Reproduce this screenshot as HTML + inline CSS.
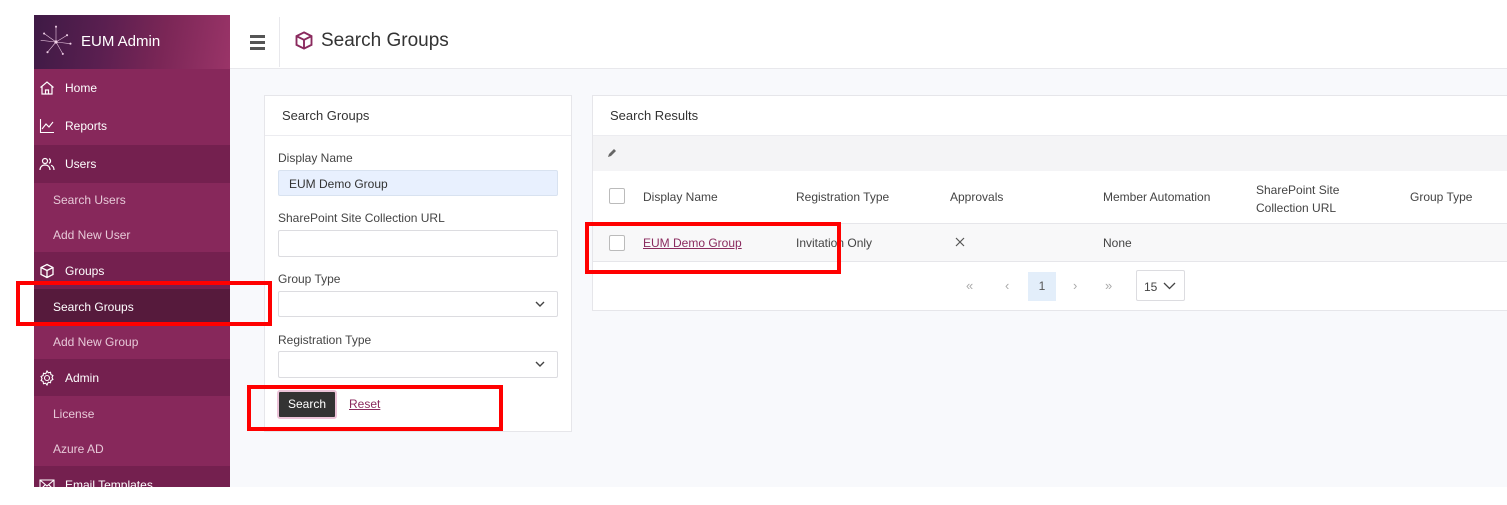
<!DOCTYPE html>
<html><head><meta charset="utf-8"><style>
*{box-sizing:border-box;margin:0;padding:0}
body{width:1507px;height:505px;background:#fff;font-family:"Liberation Sans",sans-serif;position:relative;overflow:hidden;color:#333}
.a{position:absolute}
.sb{left:34px;top:15px;width:196px;height:472px;background:#87285b;overflow:hidden}
.logo{left:0;top:0;width:196px;height:54px;background:linear-gradient(100deg,#3e1a45 0%,#5a1f50 35%,#7a2656 65%,#9a3468 100%)}
.it{left:0;width:196px;color:#fff;font-size:12px;display:flex;align-items:center}
.sec{background:#74204f}
.sub{color:#e7c9d8;padding-left:19px}
.act{background:#561a3c;color:#fff}
.ic{width:16px;height:16px;margin:0 10px 0 5px}
.hdr{left:230px;top:15px;width:1277px;height:54px;background:#fff;border-bottom:1px solid #e8e8ec}
.cont{left:230px;top:69px;width:1277px;height:418px;background:#f8f9fc}
.card{background:#fff;border:1px solid #e6e6ea}
.lbl{font-size:12px;color:#444}
.inp{background:#fff;border:1px solid #dcdce0;border-radius:2px}
.th{font-size:12px;color:#444;top:190px}
.red{border:4px solid #f00}
.hb{left:20px;width:15px;height:3px;background:#555}
</style></head><body>
<div class="a sb">
 <div class="a logo">
  <svg class="a" style="left:5px;top:8px" width="34" height="38" viewBox="0 0 40 44" stroke="#e9c6e0" stroke-width="0.7" fill="#f2d8ea"><path d="M20 22 L20 4 M20 22 L6 12 M20 22 L33 14 M20 22 L10 34 M20 22 L28 36 M20 22 L37 24 M20 22 L2 20" fill="none"/><circle cx="20" cy="22" r="1.6"/><circle cx="20" cy="4" r="0.9"/><circle cx="6" cy="12" r="0.9"/><circle cx="33" cy="14" r="0.9"/><circle cx="10" cy="34" r="0.9"/><circle cx="28" cy="36" r="0.9"/><circle cx="37" cy="24" r="0.9"/></svg>
  <div class="a" style="left:47px;top:18px;color:#fff;font-size:15px">EUM Admin</div>
 </div>
 <div class="a it" style="top:54px;height:38px"><svg class="ic" viewBox="0 0 16 16" fill="none" stroke="#fff" stroke-width="1.2"><path d="M1.5 7.5L8 2l6.5 5.5M3 6.5V14h10V6.5M6.5 14V10h3v4"/></svg>Home</div>
 <div class="a it" style="top:92px;height:38px"><svg class="ic" viewBox="0 0 16 16" fill="none" stroke="#fff" stroke-width="1.1"><path d="M1.5 1v13.5H15M3 11l4-5 3 3 4-5"/></svg>Reports</div>
 <div class="a it sec" style="top:130px;height:38px"><svg class="ic" viewBox="0 0 16 16" fill="none" stroke="#fff" stroke-width="1.2"><circle cx="6" cy="5" r="2.5"/><path d="M1 14c0-3 2-5 5-5s5 2 5 5M10 2.7a2.5 2.5 0 010 4.6M12 9.3c2 .6 3 2.5 3 4.7"/></svg>Users</div>
 <div class="a it sub" style="top:168px;height:34px">Search Users</div>
 <div class="a it sub" style="top:202px;height:35px">Add New User</div>
 <div class="a it sec" style="top:237px;height:37px"><svg class="ic" viewBox="0 0 16 16" fill="none" stroke="#fff" stroke-width="1.3"><path d="M8 1.5l6 3v7l-6 3-6-3v-7zM2 4.5l6 3 6-3M8 7.5v7"/></svg>Groups</div>
 <div class="a it sub act" style="top:274px;height:35px">Search Groups</div>
 <div class="a it sub" style="top:309px;height:35px">Add New Group</div>
 <div class="a it sec" style="top:344px;height:37px"><svg class="ic" viewBox="0 0 16 16" fill="none" stroke="#fff" stroke-width="1.1"><circle cx="8" cy="8" r="2.5"/><path d="M8 1l1.3 1.8 2.2-.5.4 2.2 2 1-.9 2 .9 2-2 1-.4 2.2-2.2-.5L8 15l-1.3-1.8-2.2.5-.4-2.2-2-1 .9-2-.9-2 2-1 .4-2.2 2.2.5z"/></svg>Admin</div>
 <div class="a it sub" style="top:381px;height:35px">License</div>
 <div class="a it sub" style="top:416px;height:35px">Azure AD</div>
 <div class="a it sec" style="top:451px;height:38px"><svg class="ic" viewBox="0 0 16 16" fill="none" stroke="#fff" stroke-width="1.1"><path d="M1 3h14v10H1zM1 3l7 6 7-6M1 13l5-5M15 13l-5-5"/></svg>Email Templates</div>
</div>
<div class="a hdr">
 <div class="a hb" style="top:20px"></div>
 <div class="a hb" style="top:26px"></div>
 <div class="a hb" style="top:32px"></div>
 <div class="a" style="left:49px;top:2px;width:1px;height:50px;background:#e8e8ec"></div>
 <svg class="a" style="left:64px;top:15px" width="20" height="21" viewBox="0 0 16 16" fill="none" stroke="#8a2a5e" stroke-width="1.5"><path d="M8 1.5l6 3v7l-6 3-6-3v-7zM2 4.5l6 3 6-3M8 7.5v7"/></svg>
 <div class="a" style="left:91px;top:15px;font-size:19px;color:#333">Search Groups</div>
</div>
<div class="a cont"></div>
<div class="a card" style="left:264px;top:95px;width:308px;height:337px">
 <div class="a" style="left:0;top:0;width:306px;height:40px;border-bottom:1px solid #ececf0"></div>
 <div class="a" style="left:17px;top:12px;font-size:13px;color:#333">Search Groups</div>
 <div class="a lbl" style="left:13px;top:55px">Display Name</div>
 <div class="a inp" style="left:13px;top:74px;width:280px;height:26px;background:#e8f0fe;border-color:#d8e2f0"><span class="a" style="left:10px;top:6px;font-size:12px;color:#333">EUM Demo Group</span></div>
 <div class="a lbl" style="left:13px;top:115px">SharePoint Site Collection URL</div>
 <div class="a inp" style="left:13px;top:134px;width:280px;height:27px"></div>
 <div class="a lbl" style="left:13px;top:176px">Group Type</div>
 <div class="a inp" style="left:13px;top:195px;width:280px;height:26px"><svg class="a" style="left:256px;top:9px" width="10" height="7" viewBox="0 0 10 7" fill="none" stroke="#444" stroke-width="1.4"><path d="M1 1l4 4 4-4"/></svg></div>
 <div class="a lbl" style="left:13px;top:237px">Registration Type</div>
 <div class="a inp" style="left:13px;top:255px;width:280px;height:27px"><svg class="a" style="left:256px;top:9px" width="10" height="7" viewBox="0 0 10 7" fill="none" stroke="#444" stroke-width="1.4"><path d="M1 1l4 4 4-4"/></svg></div>
 <div class="a" style="left:12px;top:294px;width:60px;height:29px;background:#333;border:2px solid #ecc3d8;border-radius:3px;color:#fff;font-size:12px;text-align:center;line-height:25px">Search</div>
 <div class="a" style="left:84px;top:301px;font-size:12px;color:#8a2a5e;text-decoration:underline">Reset</div>
</div>
<div class="a card" style="left:592px;top:95px;width:920px;height:216px">
 <div class="a" style="left:17px;top:12px;font-size:13px;color:#333">Search Results</div>
 <div class="a" style="left:0;top:39px;width:918px;height:36px;background:#f4f4f6;border-top:1px solid #ececf0"></div>
 <svg class="a" style="left:14px;top:52px" width="10" height="10" viewBox="0 0 10 10"><path d="M1 9l1-3 5-5 2 2-5 5z" fill="#666"/></svg>
 <div class="a" style="left:0;top:127px;width:918px;height:39px;background:#f8f8f9;border-top:1px solid #e6e6ea;border-bottom:1px solid #e6e6ea"></div>
</div>
<div class="a" style="left:609px;top:188px;width:16px;height:16px;border:1px solid #bbb;border-radius:2px;background:#fff"></div>
<div class="a th" style="left:643px">Display Name</div>
<div class="a th" style="left:796px">Registration Type</div>
<div class="a th" style="left:950px">Approvals</div>
<div class="a th" style="left:1103px">Member Automation</div>
<div class="a" style="left:1256px;top:181px;font-size:12px;color:#444;line-height:18px">SharePoint Site<br>Collection URL</div>
<div class="a th" style="left:1410px">Group Type</div>
<div class="a" style="left:609px;top:235px;width:16px;height:16px;border:1px solid #bbb;border-radius:2px;background:#fff"></div>
<div class="a" style="left:643px;top:236px;font-size:12px;color:#8a2a5e;text-decoration:underline">EUM Demo Group</div>
<div class="a" style="left:796px;top:236px;font-size:12px;color:#444">Invitation Only</div>
<svg class="a" style="left:955px;top:237px" width="10" height="10" viewBox="0 0 10 10" stroke="#555" stroke-width="1.2"><path d="M1 1l8 8M9 1l-8 8"/></svg>
<div class="a" style="left:1103px;top:236px;font-size:12px;color:#444">None</div>
<div class="a" style="left:966px;top:278px;font-size:13px;color:#aaa">«</div>
<div class="a" style="left:1005px;top:278px;font-size:13px;color:#aaa">‹</div>
<div class="a" style="left:1028px;top:272px;width:28px;height:29px;background:#e3eefa;font-size:12px;color:#555;text-align:center;line-height:29px">1</div>
<div class="a" style="left:1073px;top:278px;font-size:13px;color:#aaa">›</div>
<div class="a" style="left:1105px;top:278px;font-size:13px;color:#aaa">»</div>
<div class="a" style="left:1136px;top:270px;width:49px;height:31px;border:1px solid #dcdce0;background:#fff;border-radius:2px"><span class="a" style="left:7px;top:9px;font-size:12px;color:#444">15</span><svg class="a" style="left:26px;top:11px" width="13" height="8" viewBox="0 0 13 8" fill="none" stroke="#444" stroke-width="1.3"><path d="M1 1l5.5 5.5L12 1"/></svg></div>
<div class="a red" style="left:16px;top:281px;width:256px;height:45px"></div>
<div class="a red" style="left:247px;top:385px;width:256px;height:46px"></div>
<div class="a red" style="left:585px;top:222px;width:256px;height:52px"></div>
</body></html>
